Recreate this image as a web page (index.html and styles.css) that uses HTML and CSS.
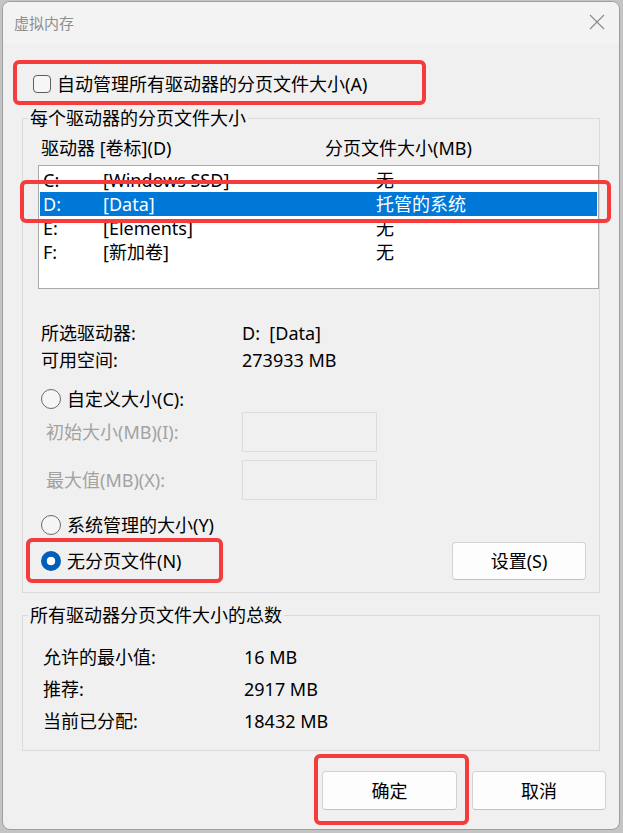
FILE: index.html
```html
<!DOCTYPE html>
<html lang="zh-CN">
<head>
<meta charset="utf-8">
<title>虚拟内存</title>
<link rel="stylesheet" href="styles.css">
</head>
<body>
<div class="window">
  <div class="titlebar">
    <span class="title">虚拟内存</span>
    <svg class="close" width="16" height="16" viewBox="0 0 16 16" aria-hidden="true">
      <path d="M1 1L15 15M15 1L1 15" stroke="#8a8a8a" stroke-width="1.1" fill="none"/>
    </svg>
  </div>
  <div class="content">
    <div class="check-row">
      <span class="checkbox"></span>
      <span>自动管理所有驱动器的分页文件大小(A)</span>
    </div>

    <fieldset class="group g1">
      <legend>每个驱动器的分页文件大小</legend>
      <div class="list-header">
        <span class="h1">驱动器 [卷标](D)</span>
        <span>分页文件大小(MB)</span>
      </div>
      <div class="listbox">
        <div class="row"><span class="c1">C:</span><span class="c2">[Windows SSD]</span><span>无</span></div>
        <div class="row sel"><span class="c1">D:</span><span class="c2">[Data]</span><span>托管的系统</span></div>
        <div class="row"><span class="c1">E:</span><span class="c2">[Elements]</span><span>无</span></div>
        <div class="row"><span class="c1">F:</span><span class="c2">[新加卷]</span><span>无</span></div>
      </div>
      <div class="info">
        <div class="kv"><span class="k">所选驱动器:</span><span>D:&nbsp; [Data]</span></div>
        <div class="kv"><span class="k">可用空间:</span><span>273933 MB</span></div>
      </div>
      <div class="radio-row r1"><span class="radio"></span><span>自定义大小(C):</span></div>
      <div class="input-row i1"><span class="dis-label">初始大小(MB)(I):</span><span class="input"></span></div>
      <div class="input-row i2"><span class="dis-label">最大值(MB)(X):</span><span class="input"></span></div>
      <div class="radio-row r2"><span class="radio"></span><span>系统管理的大小(Y)</span></div>
      <div class="radio-row r3">
        <span class="radio on"></span><span>无分页文件(N)</span>
        <button class="btn set-btn">设置(S)</button>
      </div>
    </fieldset>

    <fieldset class="group g2">
      <legend>所有驱动器分页文件大小的总数</legend>
      <div class="totals">
        <div class="kv"><span class="k">允许的最小值:</span><span>16 MB</span></div>
        <div class="kv"><span class="k">推荐:</span><span>2917 MB</span></div>
        <div class="kv"><span class="k">当前已分配:</span><span>18432 MB</span></div>
      </div>
    </fieldset>

    <div class="footer">
      <button class="btn ok">确定</button>
      <button class="btn">取消</button>
    </div>
  </div>
</div>

<div class="mark m1"></div>
<div class="mark m2"></div>
<div class="mark m3"></div>
<div class="mark m4"></div>
</body>
</html>
```

FILE: styles.css
```css
* { box-sizing: border-box; }

html, body {
  margin: 0;
  padding: 0;
}

body {
  background: #c4c4c4;
  font-family: "Noto Sans", "Noto Sans CJK SC", sans-serif;
  font-size: 18px;
  color: #000;
  width: 623px;
  height: 833px;
  overflow: hidden;
}

.window {
  margin: 1px 0 0 2px;
  width: 618px;
  height: 829px;
  border: 1px solid #9e9e9e;
  border-radius: 8px;
  background: #f0f0f0;
  overflow: hidden;
}

.titlebar {
  height: 42px;
  background: #f3f3f3;
  display: flex;
  align-items: center;
  padding-left: 11px;
}

.title {
  font-size: 15px;
  color: #8e8e8e;
  line-height: 20px;
}

.close {
  margin-left: auto;
  margin-right: 14px;
  margin-top: -2px;
}

.content {
  padding: 28px 13px 0 19px;
}

.check-row {
  display: flex;
  align-items: center;
  height: 24px;
  line-height: 24px;
  padding-left: 11px;
  gap: 6px;
}

.checkbox {
  width: 18px;
  height: 18px;
  border: 1px solid #5f5f5f;
  border-radius: 4px;
  background: #f6f6f6;
  flex: none;
}

.group {
  margin: 0 6px 0 0;
  padding: 0;
  min-width: 0;
  border: 1px solid #dadada;
}

.group legend {
  margin-left: 5px;
  padding: 0 2px;
  line-height: 24px;
  font-size: 18px;
}

.g1 {
  margin-top: 10px;
  padding-bottom: 12px;
}

.list-header {
  margin-top: 6px;
  height: 24px;
  line-height: 24px;
  padding-left: 18px;
  display: flex;
}

.list-header .h1 {
  width: 284px;
}

.listbox {
  margin-top: 5px;
  margin-left: 15px;
  height: 124px;
  border: 1px solid #a9a9a9;
  background: #fff;
  padding: 2px 1px;
}

.row {
  height: 24px;
  line-height: 24px;
  display: flex;
  white-space: nowrap;
}

.row .c1 {
  width: 63px;
  padding-left: 3px;
}

.row .c2 {
  width: 273px;
}

.row.sel {
  background: #0078d7;
  color: #fff;
}

.info {
  margin-top: 31px;
  padding-left: 18px;
  line-height: 27px;
}

.kv {
  display: flex;
  white-space: nowrap;
}

.info .k {
  width: 201px;
}

.radio-row {
  display: flex;
  align-items: center;
  height: 24px;
  line-height: 24px;
  padding-left: 18px;
  gap: 6px;
}

.radio {
  width: 20px;
  height: 20px;
  border-radius: 50%;
  border: 1px solid #6a6a6a;
  background: #f5f5f5;
  flex: none;
}

.radio.on {
  border: none;
  background: radial-gradient(circle, #fff 0 4px, #005fb8 4.6px);
}

.r1 { margin-top: 13px; }
.r2 { margin-top: 13px; }

.r3 {
  margin-top: 5px;
  height: 38px;
}

.input-row {
  display: flex;
  align-items: center;
  height: 40px;
  padding-left: 23px;
}

.i1 { margin-top: 1px; }
.i2 { margin-top: 8px; }

.dis-label {
  width: 196px;
  color: #a2a2a2;
  line-height: 24px;
}

.input {
  width: 135px;
  height: 40px;
  border: 1px solid #dcdcdc;
  background: #f0f0f0;
}

.btn {
  font-family: inherit;
  font-size: 18px;
  color: #000;
  background: #fdfdfd;
  border: 1px solid #d2d2d2;
  border-bottom-color: #c2c2c2;
  border-radius: 4px;
  width: 134px;
  height: 38px;
  padding: 0;
  line-height: 24px;
}

.set-btn {
  margin-left: auto;
  margin-right: 13px;
}

.g2 {
  margin-top: 10px;
  padding-bottom: 13px;
}

.totals {
  margin-top: 14px;
  padding-left: 20px;
  line-height: 32px;
}

.totals .k {
  width: 201px;
}

.footer {
  margin-top: 20px;
  display: flex;
  justify-content: flex-end;
  gap: 15px;
}

.footer .btn {
  height: 39px;
}

.footer .ok {
  width: 135px;
}

.mark {
  position: absolute;
  border: 4px solid #f73b3b;
  border-radius: 6px;
}

.m1 { left: 13px; top: 60px; width: 413px; height: 45px; }
.m2 { left: 20px; top: 180px; width: 591px; height: 43px; }
.m3 { left: 26px; top: 538px; width: 197px; height: 45px; }
.m4 { left: 314px; top: 754px; width: 155px; height: 71px; }
```
